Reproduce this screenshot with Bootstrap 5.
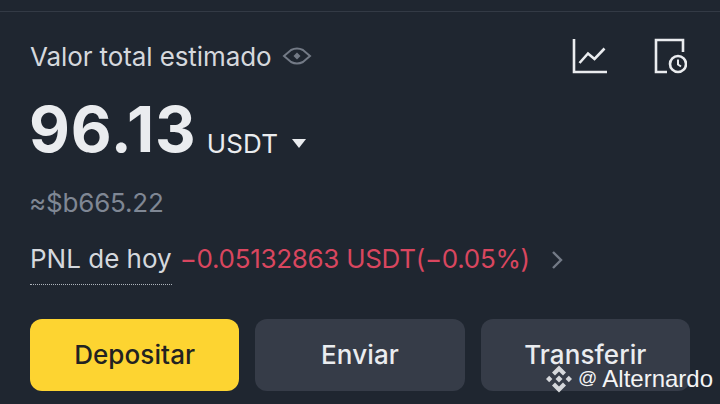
<!DOCTYPE html>
<html lang="es">
<head>
  <meta charset="UTF-8">
  <title>Valor total estimado</title>
  <link href="https://cdn.jsdelivr.net/npm/bootstrap@5.3.3/dist/css/bootstrap.min.css" rel="stylesheet">
  <style>
    html, body { height: 404px; overflow: hidden; }
    body { background: #1f2630; font-family: Inter, "Liberation Sans", sans-serif; color: #eaecef; position: relative; }
    .wallet-panel { margin-top: 11px; border-top: 1px solid #333a45; padding: 28px 30px 0 30px; }
    .total-label { font-size: 26px; line-height: 34px; letter-spacing: -0.1px; color: #d5d8dd; }
    .eye-icon { margin-left: 11px; margin-top: -2px; }
    .head-row { height: 34px; }
    .head-icons { gap: 46px; margin-right: 3px; margin-top: -2px; }
    .amount-row { margin-top: 23px; height: 64px; }
    .amount { font-size: 63px; line-height: 64px; font-weight: 700; color: #eaecef; letter-spacing: 0.9px; margin-left: -1px; }
    .coin { font-size: 26px; line-height: 30px; margin-left: 10px; margin-bottom: 2px; color: #eaecef; letter-spacing: 0.2px; }
    .coin-caret { width: 0; height: 0; border-left: 7px solid transparent; border-right: 7px solid transparent; border-top: 9px solid #eaecef; margin-left: 14px; margin-bottom: 13px; }
    .fiat { font-size: 26px; line-height: 34px; color: #7f8794; margin-top: 25px; letter-spacing: -0.2px; margin-left: -1px; }
    .pnl-row { margin-top: 22px; height: 43px; }
    .pnl-label { font-size: 26px; line-height: 34px; height: 43px; color: #d5d8dd; border-bottom: 1px dotted #aeb4bc; }
    .pnl-value { font-size: 26px; line-height: 34px; color: #d9465f; margin-left: 8px; letter-spacing: -0.3px; }
    .pnl-arrow { margin-left: 21px; margin-top: 3px; }
    .action-row { margin-top: 34px; gap: 16px; width: 660px; }
    .action-btn { flex: 1 1 0; height: 72px; border: 0; border-radius: 12px; font-size: 26px; font-weight: 500; letter-spacing: 0.1px; background: #363c48; color: #eaecef; padding: 0 0 2px 0; }
    .action-btn.primary-action { background: #fdd431; color: #222; }
    .watermark { position: absolute; left: 545px; top: 363px; color: #fff; font-family: "Liberation Sans", sans-serif; font-size: 24px; line-height: 32px; gap: 5px; opacity: .95; }
    .at-sign { font-size: 19px; margin-top: -2px; }
  </style>
</head>
<body>
  <div class="wallet-panel">
    <div class="head-row d-flex justify-content-between align-items-center">
      <div class="d-flex align-items-center">
        <span class="total-label">Valor total estimado</span>
        <svg class="eye-icon" width="30" height="22" viewBox="0 0 30 22" fill="none" stroke="#737a86" stroke-width="2">
          <path d="M2 11 L9 5 Q15 2 21 5 L28 11 L21 17 Q15 20 9 17 Z"/>
          <path d="M15 7.5 L18.5 11 L15 14.5 L11.5 11 Z" fill="#737a86" stroke="none"/>
        </svg>
      </div>
      <div class="head-icons d-flex align-items-center">
        <svg width="36" height="36" viewBox="0 0 36 36" fill="none" stroke="#eaecef" stroke-width="2.6">
          <path d="M2 1 V34 H35"/>
          <path d="M7.5 25 L16 15.5 L22.5 21 L32.5 10.5"/>
        </svg>
        <svg width="33" height="36" viewBox="0 0 33 36" fill="none" stroke="#eaecef" stroke-width="2.6">
          <path d="M13 34 H2 V2 H29 V14"/>
          <circle cx="24" cy="26" r="8"/>
          <path d="M24 21.5 V26.5 L27 28.5" stroke-width="2"/>
        </svg>
      </div>
    </div>

    <div class="amount-row d-flex align-items-end">
      <span class="amount">96.13</span>
      <span class="coin">USDT</span>
      <span class="coin-caret"></span>
    </div>

    <div class="fiat">≈$b665.22</div>

    <div class="pnl-row d-flex align-items-start">
      <span class="pnl-label">PNL de hoy</span>
      <span class="pnl-value">−0.05132863 USDT(−0.05%)</span>
      <svg class="pnl-arrow" width="14" height="28" viewBox="0 0 14 28" fill="none" stroke="#737a86" stroke-width="2.4">
        <path d="M2 7 L10 15 L2 23"/>
      </svg>
    </div>

    <div class="action-row d-flex">
      <button class="btn action-btn primary-action">Depositar</button>
      <button class="btn action-btn">Enviar</button>
      <button class="btn action-btn">Transferir</button>
    </div>
  </div>

  <div class="watermark d-flex align-items-center">
    <svg width="28" height="28" viewBox="0 0 28 28" fill="#dfe1e4">
      <path d="M14 0.5 L21 7.5 L18 10.5 L14 6.5 L10 10.5 L7 7.5 Z"/>
      <path d="M14 27.5 L7 20.5 L10 17.5 L14 21.5 L18 17.5 L21 20.5 Z"/>
      <path d="M4.2 10.8 L7.4 14 L4.2 17.2 L1 14 Z"/>
      <path d="M23.8 10.8 L27 14 L23.8 17.2 L20.6 14 Z"/>
      <path d="M14 10.5 L17.5 14 L14 17.5 L10.5 14 Z"/>
    </svg>
    <span class="at-sign">@</span>
    <span>Alternardo</span>
  </div>
</body>
</html>
